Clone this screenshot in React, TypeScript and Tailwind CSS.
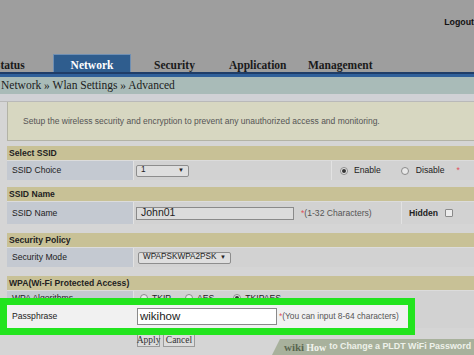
import type { ReactNode } from 'react'

const sans = "font-['Liberation_Sans',Arial,sans-serif]"
const serif = "font-['Liberation_Serif','Times_New_Roman',serif]"

function Radio({ checked = false }: { checked?: boolean }) {
  return (
    <span className="flex h-[8px] w-[8px] items-center justify-center rounded-full border border-[#8a8a8a] bg-[#e8e8e8]">
      {checked && <span className="h-[4px] w-[4px] rounded-full bg-[#333]" />}
    </span>
  )
}

function Select({ label, width }: { label: string; width: string }) {
  return (
    <div className={`flex h-[12px] items-center justify-between rounded-[2px] border border-[#8d8d8d] bg-[#dedede] pl-[4px] pr-[4px] text-[8.2px] text-[#222] ${width}`}>
      <span>{label}</span>
      <span className="text-[6px]">▼</span>
    </div>
  )
}

function Group({ title, className = '', children }: { title: string; className?: string; children: ReactNode }) {
  return (
    <div className={className}>
      <div className="flex h-[14px] items-center bg-[#c8c196] pl-[2px] text-[8.6px] font-bold text-[#222]">{title}</div>
      {children}
    </div>
  )
}

function Row({ label, h = 'h-[20px]', children }: { label: string; h?: string; children: ReactNode }) {
  return (
    <div className={`flex border-t border-[#dcdcdc] ${h}`}>
      <div className="flex w-[126px] shrink-0 items-center bg-[#c4c9d1] pl-[5px] text-[8.6px] text-[#222]">{label}</div>
      <div className="flex flex-1 items-center border-l border-[#e2e2e2] bg-[#d2d2d2]">{children}</div>
    </div>
  )
}

export default function App() {
  return (
    <div className={`relative h-[355px] w-[474px] overflow-hidden bg-[#d5d5d5] ${sans}`}>
      {/* top bar */}
      <div className="flex h-[54px] justify-end bg-[#9e9e9e] pt-[17px]">
        <span className="text-[8.8px] font-bold leading-[10px] text-[#111]">Logout</span>
      </div>

      {/* tabs */}
      <div className={`flex h-[18px] bg-[#9e9e9e] text-[11.5px] font-bold text-[#1a1a1a] ${serif}`}>
        <span className="ml-[-6px] w-[59px] pt-[4px] leading-[14px]">Status</span>
        <span className="w-[78px] border-t border-x border-[#6f8fb3] bg-[#2f5d8e] pt-[3px] text-center leading-[14px] text-white">Network</span>
        <span className="ml-[23px] w-[75px] pt-[4px] leading-[14px]">Security</span>
        <span className="w-[79px] pt-[4px] leading-[14px]">Application</span>
        <span className="pt-[4px] leading-[14px]">Management</span>
      </div>
      <div className="h-[5px] border-t-2 border-[#1f3d68] bg-[#30609a]" />

      {/* breadcrumb */}
      <div className={`h-[17px] bg-[#a9bbb8] pl-[1px] text-[11.5px] leading-[17px] text-[#1c1c1c] ${serif}`}>
        Network » Wlan Settings » Advanced
      </div>
      <div className="h-[8px] border-b border-[#b9b9b9] bg-[#d0d1d5]" />

      {/* content */}
      <div className="pl-[7px]">
        <div className="flex h-[39px] items-center border border-r-0 border-t-0 border-[#b3b3a6] bg-[#d7d7c1] pl-[15px] text-[8.5px] text-[#555]">
          Setup the wireless security and encryption to prevent any unauthorized access and monitoring.
        </div>

        <Group title="Select SSID" className="mt-[5px]">
          <Row label="SSID Choice">
            <div className="flex h-full w-[197px] items-center pl-[2px]">
              <Select label="1" width="w-[53px]" />
            </div>
            <div className="flex h-full flex-1 items-center border-l border-[#e2e2e2] pl-[8px] text-[8.6px] text-[#222]">
              <Radio checked />
              <span className="ml-[6px]">Enable</span>
              <span className="ml-[20px]"><Radio /></span>
              <span className="ml-[7px]">Disable</span>
              <span className="ml-[12px] text-[#e0505a]">*</span>
            </div>
          </Row>
        </Group>

        <Group title="SSID Name" className="mt-[7px]">
          <Row label="SSID Name" h="h-[23px]">
            <div className="flex h-full w-[267px] items-center pl-[2px]">
              <div className="flex h-[13px] w-[158px] items-center border border-[#8a8a8a] bg-[#dcdcdc] pl-[4px] text-[10.5px] text-[#222]">
                John01
              </div>
              <span className="ml-[7px] text-[8.6px] text-[#555]">
                <span className="text-[#e0505a]">*</span>(1-32 Characters)
              </span>
            </div>
            <div className="flex h-full flex-1 items-center border-l border-[#e2e2e2] pl-[7px] text-[8.6px] font-bold text-[#222]">
              Hidden
              <span className="ml-[7px] h-[8px] w-[8px] rounded-[1px] border border-[#8a8a8a] bg-[#ececec]" />
            </div>
          </Row>
        </Group>

        <Group title="Security Policy" className="mt-[9px]">
          <Row label="Security Mode">
            <div className="pl-[4px]">
              <Select label="WPAPSKWPA2PSK" width="w-[93px]" />
            </div>
          </Row>
        </Group>

        <Group title="WPA(Wi-Fi Protected Access)" className="mt-[9px]">
          <Row label="WPA Algorithms" h="h-[15px]">
            <div className="flex items-center pl-[6px] text-[8.6px] text-[#222]">
              <Radio />
              <span className="ml-[4px]">TKIP</span>
              <span className="ml-[14px]"><Radio /></span>
              <span className="ml-[4px]">AES</span>
              <span className="ml-[19px]"><Radio checked /></span>
              <span className="ml-[4px]">TKIPAES</span>
            </div>
          </Row>
          <div className="flex h-[23px] bg-[#d2d2d2]">
            <div className="flex w-[401px] bg-[#f1f1f1]">
              <div className="flex w-[126px] items-center pl-[5px] text-[8.6px] text-[#222]">Passphrase</div>
              <div className="flex items-center pl-[4px]">
                <div className="flex h-[17px] w-[140px] items-center border border-[#8a8a8a] bg-white pl-[2px] text-[11.5px] text-[#222]">
                  wikihow
                </div>
                <span className="ml-[2px] text-[8.4px] text-[#555]">
                  <span className="text-[#e0505a]">*</span>(You can input 8-64 characters)
                </span>
              </div>
            </div>
          </div>
        </Group>

        <div className={`flex gap-[3px] pl-[130px] pt-[6px] text-[9.5px] text-[#333] ${serif}`}>
          <span className="flex h-[13px] w-[23px] items-center justify-center border border-[#9a9a9a] bg-[#dcdcdc]">Apply</span>
          <span className="flex h-[13px] w-[32px] items-center justify-center border border-[#9a9a9a] bg-[#dcdcdc]">Cancel</span>
        </div>
      </div>

      {/* highlight annotation */}
      <div className="pointer-events-none absolute left-0 top-[298px] h-[37px] w-[415px] border-[7px] border-[#22e41e]" />

      {/* watermark */}
      <div className="absolute bottom-0 right-0 flex h-[16px] w-[202px] items-center bg-[#a3ad96]/90 pl-[12px] [clip-path:polygon(8px_0,100%_0,100%_100%,0_100%)]">
        <span className={`text-[11px] font-bold text-[#5a6650] ${serif}`}>wiki</span>
        <span className={`ml-[2px] text-[10px] font-bold text-[#f2f4ee] ${serif}`}>How</span>
        <span className="ml-[3px] text-[8.9px] font-bold text-[#eef1ea]">to Change a PLDT WiFi Password</span>
      </div>
    </div>
  )
}
